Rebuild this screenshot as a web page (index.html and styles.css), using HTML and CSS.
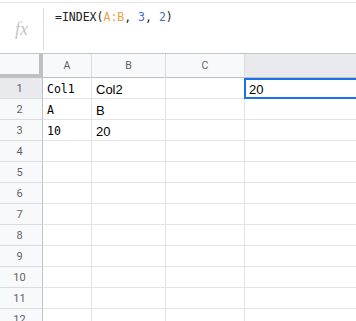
FILE: index.html
```html
<!DOCTYPE html>
<html>
<head>
<meta charset="utf-8">
<link rel="stylesheet" href="styles.css">
</head>
<body>
<div class="page">
  <div class="formula-bar">
    <div class="fx">fx</div>
    <div class="divider"></div>
    <div class="formula">=INDEX(<span class="ref">A:B</span>, <span class="num">3</span>, <span class="num">2</span>)</div>
  </div>
  <div class="sheet">
    <div class="row head">
      <div class="corner"></div>
      <div class="ch ca">A</div>
      <div class="ch cb">B</div>
      <div class="ch cc">C</div>
      <div class="ch cd sel-col"></div>
    </div>
    <div class="row">
      <div class="rh sel-row">1</div>
      <div class="cell ca mono">Col1</div>
      <div class="cell cb">Col2</div>
      <div class="cell cc"></div>
      <div class="cell cd active">20</div>
    </div>
    <div class="row">
      <div class="rh">2</div>
      <div class="cell ca mono">A</div>
      <div class="cell cb">B</div>
      <div class="cell cc"></div>
      <div class="cell cd"></div>
    </div>
    <div class="row">
      <div class="rh">3</div>
      <div class="cell ca mono">10</div>
      <div class="cell cb">20</div>
      <div class="cell cc"></div>
      <div class="cell cd"></div>
    </div>
    <div class="row"><div class="rh">4</div><div class="cell ca"></div><div class="cell cb"></div><div class="cell cc"></div><div class="cell cd"></div></div>
    <div class="row"><div class="rh">5</div><div class="cell ca"></div><div class="cell cb"></div><div class="cell cc"></div><div class="cell cd"></div></div>
    <div class="row"><div class="rh">6</div><div class="cell ca"></div><div class="cell cb"></div><div class="cell cc"></div><div class="cell cd"></div></div>
    <div class="row"><div class="rh">7</div><div class="cell ca"></div><div class="cell cb"></div><div class="cell cc"></div><div class="cell cd"></div></div>
    <div class="row"><div class="rh">8</div><div class="cell ca"></div><div class="cell cb"></div><div class="cell cc"></div><div class="cell cd"></div></div>
    <div class="row"><div class="rh">9</div><div class="cell ca"></div><div class="cell cb"></div><div class="cell cc"></div><div class="cell cd"></div></div>
    <div class="row"><div class="rh">10</div><div class="cell ca"></div><div class="cell cb"></div><div class="cell cc"></div><div class="cell cd"></div></div>
    <div class="row"><div class="rh">11</div><div class="cell ca"></div><div class="cell cb"></div><div class="cell cc"></div><div class="cell cd"></div></div>
    <div class="row"><div class="rh">12</div><div class="cell ca"></div><div class="cell cb"></div><div class="cell cc"></div><div class="cell cd"></div></div>
  </div>
</div>
</body>
</html>
```
FILE: styles.css
```css
* { box-sizing: border-box; }
html, body { margin: 0; padding: 0; background: #fff; }
body { width: 356px; height: 321px; overflow: hidden; font-family: "Liberation Sans", Arial, sans-serif; }
.page { padding-top: 2px; }
.formula-bar {
  display: flex;
  height: 52px;
  border-top: 1px solid #e3e3e3;
  border-bottom: 1px solid #c4c4c4;
}
.fx {
  width: 43px;
  display: flex;
  align-items: center;
  justify-content: center;
  font-family: "Liberation Serif", serif;
  font-style: italic;
  font-size: 18px;
  color: #c4c6ca;
  padding-top: 3px;
}
.divider {
  width: 1px;
  background: #dadce0;
  margin: 5px 0 3px 0;
}
.formula {
  padding: 6px 0 0 11px;
  font-family: "DejaVu Sans Mono", monospace;
  font-size: 11.5px;
  line-height: 17px;
  color: #202124;
  white-space: pre;
}
.formula .ref { color: #e9a23b; }
.formula .num { color: #3f6fc5; }

.sheet { display: flex; flex-direction: column; }
.row { display: flex; height: 21px; }
.row.head { height: 24px; }
.corner {
  width: 43px;
  background: #f8f9fa;
  border-right: 4px solid #c0c0c0;
  border-bottom: 4px solid #c0c0c0;
}
.ca { width: 49px; }
.cb { width: 74px; }
.cc { width: 79px; }
.cd { flex: 1; }
.ch {
  background: #f8f9fa;
  border-right: 1px solid #dadce0;
  border-bottom: 1px solid #c0c0c0;
  display: flex;
  align-items: center;
  justify-content: center;
  font-family: Roboto, "Liberation Sans", sans-serif;
  font-size: 10.5px;
  color: #5f6368;
}
.ch.sel-col { background: #e8eaed; border-right: none; }
.rh {
  width: 43px;
  background: #f8f9fa;
  border-right: 1px solid #c0c0c0;
  border-bottom: 1px solid #dadce0;
  display: flex;
  align-items: center;
  justify-content: center;
  padding-right: 3px;
  font-family: Roboto, "Liberation Sans", sans-serif;
  font-size: 11px;
  color: #5f6368;
}
.rh.sel-row { background: #e8eaed; }
.cell {
  border-right: 1px solid #e2e3e3;
  border-bottom: 1px solid #e2e3e3;
  display: flex;
  align-items: flex-end;
  padding-left: 4px;
  font-size: 13px;
  line-height: 17px;
  color: #000;
  white-space: nowrap;
}
.cell.mono {
  font-family: "DejaVu Sans Mono", monospace;
  font-size: 11.5px;
  padding-left: 4px;
}
.cell.cd { border-right: none; }
.cell.active { position: relative; }
.cell.active::after {
  content: "";
  position: absolute;
  left: -1px;
  top: 0;
  right: -2px;
  bottom: -1px;
  border: 2px solid #1a73e8;
}
```
